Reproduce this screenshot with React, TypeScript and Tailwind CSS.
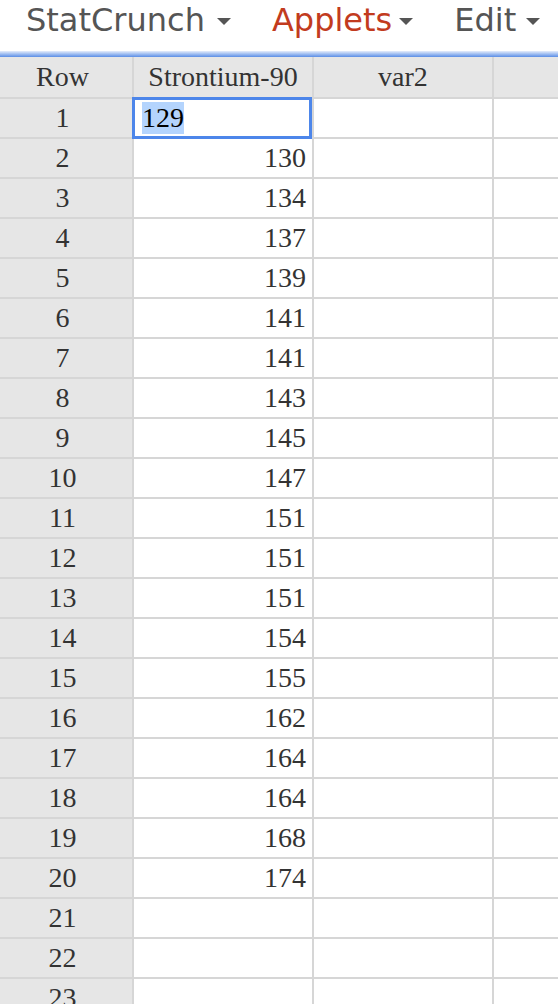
import React from "react";

const values = [129, 130, 134, 137, 139, 141, 141, 143, 145, 147, 151, 151, 151, 154, 155, 162, 164, 164, 168, 174];

function Caret({ color }: { color: string }) {
  return (
    <svg width="14" height="7" viewBox="0 0 14 7" className="shrink-0 block">
      <polygon points="0,0 14,0 7,7" fill={color} />
    </svg>
  );
}

export default function App() {
  const rows = Array.from({ length: 23 }, (_, i) => i + 1);
  return (
    <div className="w-[558px] h-[1004px] overflow-hidden bg-white">
      <div className="h-[51px] flex items-start pl-[26px] pt-[2px] font-['DejaVu_Sans',sans-serif] text-[32px] leading-[37px] whitespace-nowrap">
        <div className="flex items-center text-[#555555]">
          <span>StatCrunch</span>
          <span className="ml-[12px] mt-[1px]"><Caret color="#555555" /></span>
        </div>
        <div className="flex items-center text-[#c23b1e] ml-[41px]">
          <span>Applets</span>
          <span className="ml-[7px] mt-[1px]"><Caret color="#555555" /></span>
        </div>
        <div className="flex items-center text-[#555555] ml-[41px]">
          <span>Edit</span>
          <span className="ml-[10px] mt-[1px]"><Caret color="#555555" /></span>
        </div>
      </div>
      <div className="h-[6px] bg-linear-to-b from-[#e6edfa] to-[#5b8de5]" />
      <div className="grid grid-cols-[132px_178px_178px_200px] gap-[2px] bg-[#d6d6d6] font-['Liberation_Serif',serif] text-[28px] text-[#333333] w-[700px]">
        <div className="h-[40px] bg-[#e6e6e6] flex items-center justify-center pr-[7px]">Row</div>
        <div className="h-[40px] bg-[#e6e6e6] flex items-center justify-center">Strontium-90</div>
        <div className="h-[40px] bg-[#e6e6e6] flex items-center justify-center">var2</div>
        <div className="h-[40px] bg-[#e6e6e6]" />
        {rows.map((r) => {
          const v = values[r - 1];
          return (
            <React.Fragment key={r}>
              <div className="h-[38px] bg-[#e6e6e6] flex items-center justify-center pr-[7px]">{r}</div>
              {r === 1 ? (
                <div className="h-[38px] bg-white relative flex items-center pl-[8px]">
                  <span className="bg-[#b4d4fd] text-black leading-[32px]">{v}</span>
                  <div className="absolute -left-[2px] -top-[2px] right-0 -bottom-[2px] border-[3px] border-[#4d86ea]" />
                </div>
              ) : (
                <div className="h-[38px] bg-white flex items-center justify-end pr-[6px]">{v ?? ""}</div>
              )}
              <div className="h-[38px] bg-white" />
              <div className="h-[38px] bg-white" />
            </React.Fragment>
          );
        })}
      </div>
    </div>
  );
}
